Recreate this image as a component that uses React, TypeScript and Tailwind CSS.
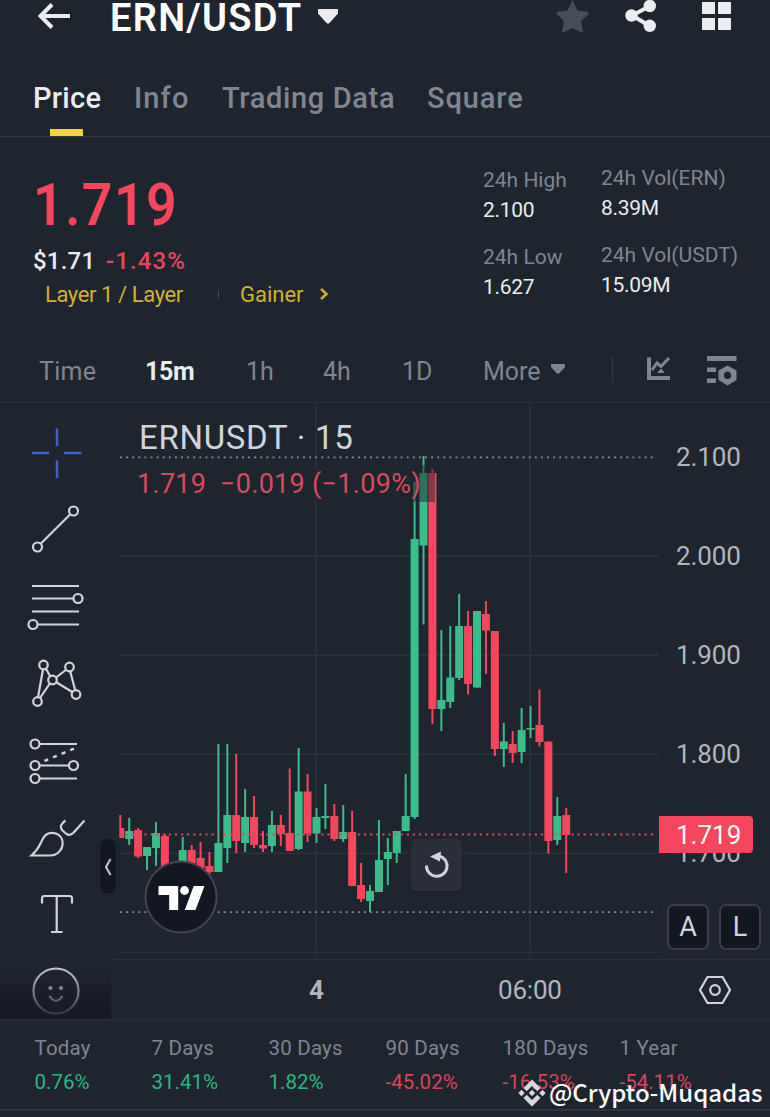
import type { ReactNode } from 'react';

type Candle = {
  up: boolean;
  high: number;
  top: number;
  bottom: number;
  low: number;
};

const GREEN = '#3bbd8b';
const RED = '#f6465d';

const c = (dir: 'u' | 'd', high: number, top: number, bottom: number, low: number): Candle => ({
  up: dir === 'u',
  high,
  top,
  bottom,
  low,
});

// y values in plot units, one entry per 15 minute bar
const candles: Candle[] = [
  c('d', 815, 828, 838, 838),
  c('u', 818, 831, 839, 845),
  c('d', 828, 830, 856.5, 858),
  c('u', 847, 847, 856, 870),
  c('u', 822, 833, 848, 866),
  c('d', 834, 836, 868, 868),
  c('d', 868, 868, 876, 880),
  c('u', 837, 850, 866, 868),
  c('d', 845, 850, 868, 868),
  c('d', 842, 858, 868, 870),
  c('d', 852, 866, 872, 874),
  c('u', 744, 843, 872, 872),
  c('u', 744, 815, 848, 863),
  c('d', 754, 815, 841, 853),
  c('u', 789, 817, 843, 852),
  c('d', 796, 817, 845, 848),
  c('d', 831, 845, 848.5, 852),
  c('u', 811, 825, 846, 852),
  c('d', 815, 825, 834, 846),
  c('d', 768.5, 833, 851, 851),
  c('u', 748, 791.5, 849, 850),
  c('d', 774, 791.5, 833.5, 842),
  c('u', 808, 817, 833.5, 843),
  c('u', 784, 816, 818, 829),
  c('d', 804, 816, 839, 841),
  c('u', 805, 832, 839, 842),
  c('d', 811, 832, 886, 886),
  c('d', 863, 885, 899, 902),
  c('u', 885, 891, 901, 912),
  c('u', 820, 860, 892, 892),
  c('u', 838, 852, 859, 885),
  c('u', 831, 831, 853, 863),
  c('u', 774, 816, 831, 831),
  c('u', 482, 539, 817, 819),
  c('u', 456, 473, 545.5, 624.5),
  c('d', 469, 473, 709, 724),
  c('u', 630, 700, 709, 731),
  c('u', 626, 677.5, 702, 708),
  c('u', 594, 626, 678, 680),
  c('d', 611, 626, 684, 694.5),
  c('u', 611, 611, 687.5, 687.5),
  c('d', 601, 614, 630.5, 674),
  c('d', 631, 631, 749, 756),
  c('u', 723, 741.5, 749, 767),
  c('d', 731, 744, 753, 763),
  c('u', 708, 730, 752, 763),
  c('u', 706, 728, 729.5, 738),
  c('d', 689.5, 725, 742, 746.5),
  c('d', 741.5, 741.5, 841, 853.5),
  c('u', 797, 816, 840, 845),
  c('d', 808, 815, 835, 873),
];

const tabs = [
  { label: 'Info', cell: 'w-[88px] tracking-[1.1px]' },
  { label: 'Trading Data', cell: 'w-[205px] tracking-[0.65px]' },
  { label: 'Square', cell: 'w-[110px] tracking-[0.9px]' },
];

const performance = [
  { label: 'Today', value: '0.76%', up: true },
  { label: '7 Days', value: '31.41%', up: true },
  { label: '30 Days', value: '1.82%', up: true },
  { label: '90 Days', value: '-45.02%', up: false },
  { label: '180 Days', value: '-16.53%', up: false },
  { label: '1 Year', value: '-54.11%', up: false },
];

function Header() {
  return (
    <header className="flex h-9 items-start">
      <svg className="ml-9 h-9 w-9 shrink-0" viewBox="36 0 36 36" fill="none" stroke="#eaecef" strokeWidth="4">
        <path d="M70 16H41M52 4.5 40.5 16 52 27.5" />
      </svg>
      <h1 className="ml-[38px] w-[208px] whitespace-nowrap text-[38px] font-semibold leading-[37px] tracking-[1.3px] text-white">
        ERN/USDT
      </h1>
      <svg className="h-9 w-5 shrink-0" viewBox="318 0 20 36" fill="#eaecef">
        <path d="M318 9h20v4.5l-8.5 9.5q-1.5 1-3 0L318 13.500z" />
      </svg>
      <svg className="ml-[217px] h-9 w-9 shrink-0" viewBox="555 0 36 36" fill="#474d5a">
        <path d="M572.5 0l5 10.5 10 1.200q2 .5.5 2.500l-7 7 2 9.500q0 2-2 1.500l-8.500-4.200-8.500 4.200q-2 .5-2-1.500l2-9.500-7-7q-1.500-2 .5-2.500l10-1.200z" />
      </svg>
      <svg className="ml-[33px] h-9 w-9 shrink-0" viewBox="624 0 36 36" fill="#eaecef">
        <path d="M650 6 632 15.5 650 26" fill="none" stroke="#eaecef" strokeWidth="4" />
        <circle cx="631.5" cy="15.5" r="6.2" />
        <circle cx="649.8" cy="6" r="6.2" />
        <circle cx="649.8" cy="25.8" r="6.2" />
      </svg>
      <svg className="ml-[42px] h-9 w-[30px] shrink-0" viewBox="702 0 30 36" fill="#eaecef">
        <path d="M702 2h13v12h-13zM718 2h13v12h-13zM702 18h13v12h-13zM718 18h13v12h-13z" />
      </svg>
    </header>
  );
}

function Tabs() {
  return (
    <nav className="flex h-[101px] border-b border-[#323842] pt-[45px] text-[29px] font-medium leading-[34px] text-[#7f8592]">
      <div className="ml-[33px] flex w-[101px] flex-col">
        <span className="tracking-[0.3px] text-[#eaecef]">Price</span>
        <span className="ml-[17px] mt-[14px] h-[7px] w-[33px] bg-[#f8d33a]" />
      </div>
      {tabs.map((t) => (
        <span key={t.label} className={`${t.cell} whitespace-nowrap`}>
          {t.label}
        </span>
      ))}
    </nav>
  );
}

function Stat({ label, value }: { label: string; value: string }) {
  return (
    <div className="h-[77px] whitespace-nowrap text-[21px] leading-[30px]">
      <div className="text-[#7f8592]">{label}</div>
      <div className="tracking-[-0.3px] text-[#eaecef]">{value}</div>
    </div>
  );
}

function Summary() {
  return (
    <section className="flex h-[203px]">
      <div className="w-[483px] pl-[33px]">
        <div className="mt-[34px] h-[72px] origin-left scale-x-[0.91] text-[59px] font-semibold leading-[68px] tracking-[1.6px] text-[#f6465d]">
          1.719
        </div>
        <div className="flex h-[34px] text-[24px] font-medium leading-[36px]">
          <span className="w-[73px] tracking-[0.2px] text-[#eaecef]">$1.71</span>
          <span className="tracking-[1.1px] text-[#e8465c]">-1.43%</span>
        </div>
        <div className="flex h-[34px] items-center whitespace-nowrap pl-3 text-[22px] text-[#d4b02b]">
          <span className="w-[173px] tracking-[-0.4px]">Layer 1 / Layer</span>
          <span className="mr-[21px] h-2 w-px bg-[#474d57]" />
          <span className="w-[79px]">Gainer</span>
          <svg className="h-4 w-3" viewBox="0 0 12 16" fill="none" stroke="#d4b02b" strokeWidth="2.5">
            <path d="m2 3 5.5 5L2 13" />
          </svg>
        </div>
      </div>
      <div className="w-[118px] pt-7">
        <Stat label="24h High" value="2.100" />
        <Stat label="24h Low" value="1.627" />
      </div>
      <div className="pt-[26px]">
        <Stat label="24h Vol(ERN)" value="8.39M" />
        <Stat label="24h Vol(USDT)" value="15.09M" />
      </div>
    </section>
  );
}

function Intervals() {
  return (
    <div className="flex h-[63px] items-center border-b border-[#2b313b] text-[25px] text-[#7f8592]">
      <span className="ml-[39px] w-[106px] pt-0.5 tracking-[0.3px]">Time</span>
      <span className="w-[101px] pt-0.5 font-bold tracking-[-0.3px] text-[#eaecef]">15m</span>
      <span className="w-[77px] pt-0.5">1h</span>
      <span className="w-[79px] pt-0.5">4h</span>
      <span className="w-[81px] pt-0.5">1D</span>
      <span className="w-[67px] pt-0.5">More</span>
      <svg className="mb-1 h-3 w-4" viewBox="0 0 16 12" fill="#7f8592">
        <path d="M1 1h14v3L9.5 10q-1.5 1-3 0L1 4z" />
      </svg>
      <span className="mb-1 ml-[46px] h-[26px] w-px bg-[#363c47]" />
      <svg className="mb-1 ml-[33px] h-[26px] w-[26px]" viewBox="647 356 26 26" fill="none" stroke="#7f8592">
        <path d="M650 357.5v20.5h21" strokeWidth="4" />
        <path d="m653 370 5-7 4 3.5 8-8.5" strokeWidth="3" />
        <path d="M659 372.5h6l-3-3.5z" fill="#7f8592" />
      </svg>
      <svg className="mb-[3px] ml-[34px] h-8 w-8" viewBox="707 353 32 32" fill="#7f8592">
        <path d="M708 355h29.5v5H708zM708 366.5h9v4.5h-9zM708 377.5h9v4.5h-9z" />
        <path fillRule="evenodd" d="M728.5 364.5 737.500 369.500v9.500l-9 5.500-9-5.500v-9.500zm0 6a3.800 3.800 0 1 0 .01 0z" />
      </svg>
    </div>
  );
}

function Tool({ children }: { children: ReactNode }) {
  return (
    <svg
      className="ml-6 h-[77px] w-16 shrink-0"
      viewBox="0 0 64 77"
      fill="none"
      stroke="#d1d4dc"
      strokeWidth="2.2"
    >
      {children}
    </svg>
  );
}

function DrawingToolbar() {
  return (
    <aside className="relative flex w-[111px] shrink-0 flex-col overflow-hidden pt-[11px]">
      <Tool>
        <path stroke="#3f63cb" d="M33 14.5V32M33 46.5V64M8 39h17M40 39h17.5" strokeWidth="2.5" />
      </Tool>
      <Tool>
        <circle cx="49.5" cy="20" r="4.5" />
        <circle cx="13.5" cy="56" r="4.5" />
        <path d="M46.3 23.2 16.7 52.8" />
      </Tool>
      <Tool>
        <path d="M8 18h47M8 30.5h41.5M8 43.5h47M14 56.5h41" />
        <circle cx="54" cy="30.5" r="4.5" />
        <circle cx="9" cy="56.5" r="4.5" />
      </Tool>
      <Tool>
        <circle cx="19.5" cy="20" r="4.3" />
        <circle cx="45.5" cy="22" r="4.3" />
        <circle cx="28.5" cy="35" r="4.3" />
        <circle cx="52" cy="49.5" r="4.3" />
        <circle cx="13.5" cy="56.5" r="4.3" />
        <path d="m19 24.3-5 27.9M21.8 23.6l4.400 7.600M25.9 38.5 16 53M32 32.5l9.800-7.500M46.2 26.2l5 19M32.2 37.2 48.3 47" />
      </Tool>
      <Tool>
        <circle cx="11" cy="22" r="4.5" />
        <circle cx="11" cy="43.5" r="4.5" />
        <circle cx="49.5" cy="43.5" r="4.5" />
        <circle cx="11" cy="56.5" r="4.5" />
        <path d="M15.5 22H53M15.5 43.5H45M15.5 56.5H53" />
        <path d="m20.5 39 31-13" strokeWidth="2.5" strokeDasharray="4 5.3" />
      </Tool>
      <Tool>
        <path d="M7.5 56.5c8-7 8.500-11.500 11.500-17 3-5.500 8-6 12-5.200 6 1.700 8.500 6.700 7.500 12.200-1.200 6-6.500 10-11.500 10z" />
        <path d="M41.5 21.5c-5.500 4-5.500 7-3.500 9.500l4.500 4c3 2 5 .8 7-1.200L60.5 21.5" />
      </Tool>
      <Tool>
        <path d="M18 27.5v-5q0-2.500 2.500-2.500h25q2.500 0 2.500 2.500v5M32.7 20v36M27 56h11.500" />
      </Tool>
      <Tool>
        <circle cx="32" cy="38" r="22.5" />
        <circle cx="26.5" cy="35" r="2" fill="#d1d4dc" stroke="none" />
        <circle cx="37" cy="35" r="2" fill="#d1d4dc" stroke="none" />
        <path d="M25.5 43q6.500 9.500 13 0" />
      </Tool>
      <div className="absolute inset-x-0 bottom-0 h-[56px] bg-gradient-to-b from-transparent to-[#131722]/90" />
    </aside>
  );
}

function Plot() {
  return (
    <svg className="block h-[556px] w-[548px]" viewBox="111 403 548 556">
      <g stroke="#2c323d" strokeWidth="1.5">
        {[556, 655, 754, 853, 952].map((y) => (
          <path key={y} d={`M120 ${y + 0.25}H659`} />
        ))}
        <path d="M316 403V958M530 403V958" />
      </g>
      {candles.map((k, i) => {
        const x = 120.3 + i * 8.918;
        const left = Math.max(120, x - 4);
        const color = k.up ? GREEN : RED;
        return (
          <g key={i} fill={color}>
            <rect x={x - 1} y={k.high} width={2} height={k.low - k.high} />
            <rect x={left} y={k.top} width={x + 4 - left} height={k.bottom - k.top} />
          </g>
        );
      })}
      <path d="M120 457.3H657M120 912.2H657" stroke="#868b96" strokeWidth="1.7" strokeDasharray="2 4.1" />
      <path d="M120 834.5H657" stroke="#e0455b" strokeWidth="2" strokeDasharray="2.2 3.9" />
    </svg>
  );
}

function Chart() {
  return (
    <section className="flex h-[617px] border-b border-[#2b313b] font-['Roboto',sans-serif]">
      <DrawingToolbar />
      <div className="relative w-[659px]">
        <div className="flex h-[557px] border-b border-[#2c323d]">
          <Plot />
          <div className="flex flex-col text-[26px] leading-[30px] text-[#b2b5be]">
            {['2.100', '2.000', '1.900', '1.800', '1.700'].map((p) => (
              <span key={p} className="h-[99px] pl-[17px] pt-[39px] tracking-[-0.1px]">
                {p}
              </span>
            ))}
            <div className="mt-[6px] flex gap-[10px] pl-2 text-[27px] leading-[42px] text-[#d1d4dc]">
              <button className="h-[46px] w-[42px] rounded-[7px] border-2 border-[#3a3e49] bg-[#131722]">A</button>
              <button className="h-[46px] w-[42px] rounded-[7px] border-2 border-[#3a3e49] bg-[#131722]">L</button>
            </div>
          </div>
        </div>
        <div className="flex h-[60px] items-center text-[26px] text-[#b2b5be]">
          <span className="ml-[198px] w-[189px] pt-px font-bold">4</span>
          <span className="w-[201px] pt-px tracking-[-0.2px]">06:00</span>
          <svg className="h-8 w-8" viewBox="0 0 32 32" fill="none" stroke="#d1d4dc" strokeWidth="2.2">
            <path d="M8.5 3h15L31 16l-7.500 13h-15L1 16z" />
            <circle cx="16" cy="16" r="4.8" />
          </svg>
        </div>

        {/* legend over the plot */}
        <div className="absolute left-[28px] top-[18px] whitespace-nowrap text-[33px] leading-[34px] tracking-[0.7px] text-[#d1d4dc]">
          ERNUSDT · 15
        </div>
        <div className="absolute left-[26px] top-[62px] h-[37px] w-[298px] whitespace-nowrap bg-[#1f252f]/50 text-[27px] leading-[38px] tracking-[0.3px] text-[#d84a5f]">
          <span className="inline-block w-[83px]">1.719</span>
          <span>−0.019 (−1.09%)</span>
        </div>

        {/* last price */}
        <div className="absolute left-[548px] top-[413px] h-[37px] w-[94px] rounded-r bg-[#f6465d] pl-[17px] text-[26px] leading-[38px] text-white">
          1.719
        </div>

        <button className="absolute left-[300px] top-[436px] flex h-[52px] w-[51px] items-center justify-center rounded-md bg-[#2a2e39] shadow-md">
          <svg className="h-8 w-8" viewBox="0 0 32 32" fill="none" stroke="#d1d4dc" strokeWidth="3">
            <path d="M5.5 16.5a10.300 10.300 0 1 0 13-9.500" />
            <path d="m9 7.500 11-5-1 10z" fill="#d1d4dc" stroke="none" />
          </svg>
        </button>

        <svg className="absolute left-[33px] top-[457px] h-[74px] w-[74px]" viewBox="143.5 860 74 74">
          <circle cx="180.5" cy="897" r="35.5" fill="#131722" stroke="#434651" strokeWidth="2" />
          <g fill="#fff">
            <path d="M158 886h19.700v24h-9v-15H158zM193.2 886H204l-9 24h-10.700z" />
            <circle cx="184" cy="890.5" r="4.4" />
          </g>
        </svg>

        <button className="absolute left-[-12px] top-[435px] flex h-[57px] w-[18px] items-center justify-center rounded-lg border border-[#242936] bg-[#131722]">
          <svg className="h-5 w-2 shrink-0" viewBox="0 0 8 20" fill="none" stroke="#c5c8d0" strokeWidth="2">
            <path d="M6.5 2 2 10l4.500 8" />
          </svg>
        </button>
      </div>
    </section>
  );
}

function Performance() {
  return (
    <section className="h-[91px] border-b-2 border-[#2f3540]">
      <div className="grid grid-cols-[repeat(6,117px)] pl-[34.5px] pt-[11px]">
        {performance.map((p) => (
          <div key={p.label} className="whitespace-nowrap text-[20.5px] leading-[34px]">
            <div className="tracking-[0.2px] text-[#7f8592]">{p.label}</div>
            <div className={p.up ? 'text-[#2fb583]' : 'text-[#d9455b]'}>{p.value}</div>
          </div>
        ))}
      </div>
    </section>
  );
}

function Watermark() {
  return (
    <div className="absolute left-[518px] top-[1077px] flex h-8 items-center">
      <svg className="h-7 w-7" viewBox="0 0 28 28" fill="#d6d8db">
        <path d="m14 .5 8.500 8.500-3.200 3.200L14 6.900l-5.300 5.300L5.500 9zM14 27.5 5.500 19l3.200-3.200 5.300 5.300 5.300-5.300 3.200 3.200zM3.500 10.800 6.700 14l-3.200 3.200L.3 14zM24.5 10.800l3.200 3.200-3.200 3.200-3.200-3.200zM14 10.800l3.200 3.200-3.200 3.200-3.200-3.200z" />
      </svg>
      <span className="mb-0.5 ml-[3px] whitespace-nowrap font-['Noto_Sans_CJK_SC',sans-serif] text-[24px] font-medium leading-8 text-white">
        @Crypto-Muqadas
      </span>
    </div>
  );
}

export default function App() {
  return (
    <div className="relative h-[1117px] w-[770px] overflow-hidden bg-[#1f252f] font-['Roboto',sans-serif]">
      <Header />
      <Tabs />
      <Summary />
      <Intervals />
      <Chart />
      <Performance />
      <Watermark />
    </div>
  );
}
